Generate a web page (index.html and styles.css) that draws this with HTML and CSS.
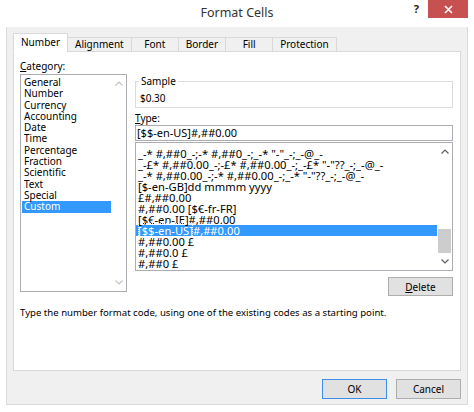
FILE: index.html
```html
<!DOCTYPE html>
<html>
<head>
    <link rel="stylesheet" href="styles.css">
</head>
<body>
    <div class="window">
        <header class="titlebar">
            <div></div>
            <span class="title">Format Cells</span>
            <div class="window-controls">
                <span class="help">?</span>
                <button class="close">
                    <svg width="9" height="9" viewBox="0 0 9 9"><path d="M1 1 L8 8 M8 1 L1 8" stroke="#fff" stroke-width="1.6" fill="none"/></svg>
                </button>
            </div>
        </header>

        <div class="client">
            <div class="tabs">
                <span class="tab active">Number</span>
                <span class="tab">Alignment</span>
                <span class="tab">Font</span>
                <span class="tab">Border</span>
                <span class="tab">Fill</span>
                <span class="tab">Protection</span>
            </div>

            <div class="panel">
                <div class="columns">
                    <div class="col-left">
                        <div class="label"><u>C</u>ategory:</div>
                        <div class="listbox category-list">
                            <ul class="items">
                                <li>General</li>
                                <li>Number</li>
                                <li>Currency</li>
                                <li>Accounting</li>
                                <li>Date</li>
                                <li>Time</li>
                                <li>Percentage</li>
                                <li>Fraction</li>
                                <li>Scientific</li>
                                <li>Text</li>
                                <li>Special</li>
                                <li class="selected">Custom</li>
                            </ul>
                            <div class="scrollbar disabled">
                                <span class="arrow"><svg width="8" height="5" viewBox="0 0 8 5"><path d="M0.5 4.5 L4 1 L7.5 4.5" stroke="#c4c4c4" stroke-width="1.2" fill="none"/></svg></span>
                                <span class="track"></span>
                                <span class="arrow"><svg width="8" height="5" viewBox="0 0 8 5"><path d="M0.5 0.5 L4 4 L7.5 0.5" stroke="#c4c4c4" stroke-width="1.2" fill="none"/></svg></span>
                            </div>
                        </div>
                    </div>

                    <div class="col-right">
                        <fieldset class="sample">
                            <legend>Sample</legend>
                            <div class="sample-value">$0.30</div>
                        </fieldset>

                        <div class="label type-label"><u>T</u>ype:</div>
                        <div class="textbox">[$$-en-US]#,##0.00</div>

                        <div class="listbox type-list">
                            <ul class="items">
                                <li>_-* #,##0_-;-* #,##0_-;_-* "-"_-;_-@_-</li>
                                <li>_-£* #,##0.00_-;-£* #,##0.00_-;_-£* "-"??_-;_-@_-</li>
                                <li>_-* #,##0.00_-;-* #,##0.00_-;_-* "-"??_-;_-@_-</li>
                                <li>[$-en-GB]dd mmmm yyyy</li>
                                <li>£#,##0.00</li>
                                <li>#,##0.00 [$€-fr-FR]</li>
                                <li>[$€-en-IE]#,##0.00</li>
                                <li class="selected"><span class="focus">[$$-en-US]</span>#,##0.00</li>
                                <li>#,##0.00 £</li>
                                <li>#,##0.0 £</li>
                                <li>#,##0 £</li>
                            </ul>
                            <div class="scrollbar">
                                <span class="arrow"><svg width="8" height="5" viewBox="0 0 8 5"><path d="M0.5 4.5 L4 1 L7.5 4.5" stroke="#606060" stroke-width="1.2" fill="none"/></svg></span>
                                <span class="track"><span class="thumb"></span></span>
                                <span class="arrow"><svg width="8" height="5" viewBox="0 0 8 5"><path d="M0.5 0.5 L4 4 L7.5 0.5" stroke="#606060" stroke-width="1.2" fill="none"/></svg></span>
                            </div>
                        </div>

                        <button class="button delete"><u>D</u>elete</button>
                    </div>
                </div>

                <p class="description">Type the number format code, using one of the existing codes as a starting point.</p>
            </div>

            <div class="footer">
                <button class="button default">OK</button>
                <button class="button">Cancel</button>
            </div>
        </div>
    </div>
</body>
</html>
```

FILE: styles.css
```css
* {
    box-sizing: border-box;
}

body {
    margin: 0;
    width: 474px;
    height: 412px;
    overflow: hidden;
    background-color: white;
    font-family: "Noto Sans", "Open Sans", sans-serif;
    font-size: 10px;
    color: #000;
}

.window {
    display: flex;
    flex-direction: column;
    height: 412px;
}

.titlebar {
    height: 27px;
    display: grid;
    grid-template-columns: 1fr auto 1fr;
    align-items: start;
}

.title {
    font-size: 12.5px;
    color: #333;
    line-height: 26px;
}

.window-controls {
    display: flex;
    justify-content: flex-end;
    align-items: flex-start;
    gap: 9px;
    padding-right: 6px;
}

.help {
    font-size: 11px;
    font-weight: bold;
    line-height: 18px;
    color: #222;
}

.close {
    all: unset;
    width: 40px;
    height: 18px;
    background-color: #c75050;
    display: flex;
    align-items: center;
    justify-content: center;
}

.client {
    margin: 0 6px;
    height: 378px;
    background-color: #f0f0f0;
    border: 1px solid #dadada;
    border-top: none;
    padding: 6px 6px 0 6px;
}

.tabs {
    display: flex;
    align-items: flex-end;
    height: 19px;
    position: relative;
    z-index: 1;
}

.tab {
    min-width: 48px;
    padding: 0 7px;
    height: 15px;
    line-height: 13px;
    text-align: center;
    background-color: #f0f0f0;
    border: 1px solid #d9d9d9;
    margin-left: -1px;
}

.tab:first-child {
    margin-left: 0;
}

.tab.active {
    height: 19px;
    line-height: 16px;
    background-color: white;
    border-bottom-color: white;
}

.panel {
    margin-top: -1px;
    height: 320px;
    background-color: white;
    border: 1px solid #d9d9d9;
    padding: 7px 7px 0 6px;
}

.columns {
    display: grid;
    grid-template-columns: 107px 318px;
    column-gap: 8px;
}

.col-left,
.col-right {
    display: flex;
    flex-direction: column;
}

.label {
    line-height: 14px;
}

.listbox {
    display: flex;
    border: 1px solid #abadb3;
    background-color: white;
}

.items {
    flex: 1;
    list-style: none;
    margin: 0;
    padding: 0;
    overflow: hidden;
}

.items li {
    white-space: nowrap;
    padding-left: 2px;
}

.items li.selected {
    background-color: #3399ff;
    color: white;
}

.category-list {
    margin-top: 1px;
    height: 218px;
}

.category-list .items {
    padding: 2px 0 0 1px;
}

.category-list .items li {
    line-height: 11.3px;
}

.scrollbar {
    width: 15px;
    display: flex;
    flex-direction: column;
}

.scrollbar .arrow {
    height: 17px;
    display: flex;
    align-items: center;
    justify-content: center;
}

.scrollbar .track {
    flex: 1;
    display: flex;
    flex-direction: column;
    padding: 0 1px;
}

.thumb {
    margin-top: auto;
    height: 24px;
    background-color: #cdcdcd;
}

.sample {
    margin: 15px 0 0 0;
    padding: 3px 4px 2px;
    border: 1px solid #dcdcdc;
    min-width: 0;
}

.sample legend {
    padding: 0 2px;
    margin-left: -1px;
    line-height: 14px;
}

.sample-value {
    line-height: 14px;
}

.type-label {
    margin-top: 4px;
    line-height: 13px;
}

.textbox {
    height: 16px;
    border: 1px solid #abadb3;
    padding: 0 1px;
    font-size: 11px;
    line-height: 14px;
}

.type-list {
    margin-top: 1px;
    height: 129px;
}

.type-list .items {
    padding-top: 5px;
    font-size: 11.2px;
}

.type-list .items li {
    line-height: 11px;
}

.focus {
    outline: 1px dotted rgba(255, 255, 255, 0.85);
    outline-offset: -1px;
}

.button {
    width: 65px;
    height: 20px;
    padding: 0;
    font-family: inherit;
    font-size: 10px;
    color: #000;
    background-color: #e1e1e1;
    border: 1px solid #adadad;
}

.delete {
    margin-top: 6px;
    height: 19px;
    align-self: flex-end;
}

.description {
    margin: 10px 0 0 0;
    font-size: 9.6px;
    line-height: 14px;
}

.footer {
    display: flex;
    justify-content: flex-end;
    gap: 9px;
    padding-top: 8px;
}

.button.default {
    border-color: #3c8ee6;
}
```
